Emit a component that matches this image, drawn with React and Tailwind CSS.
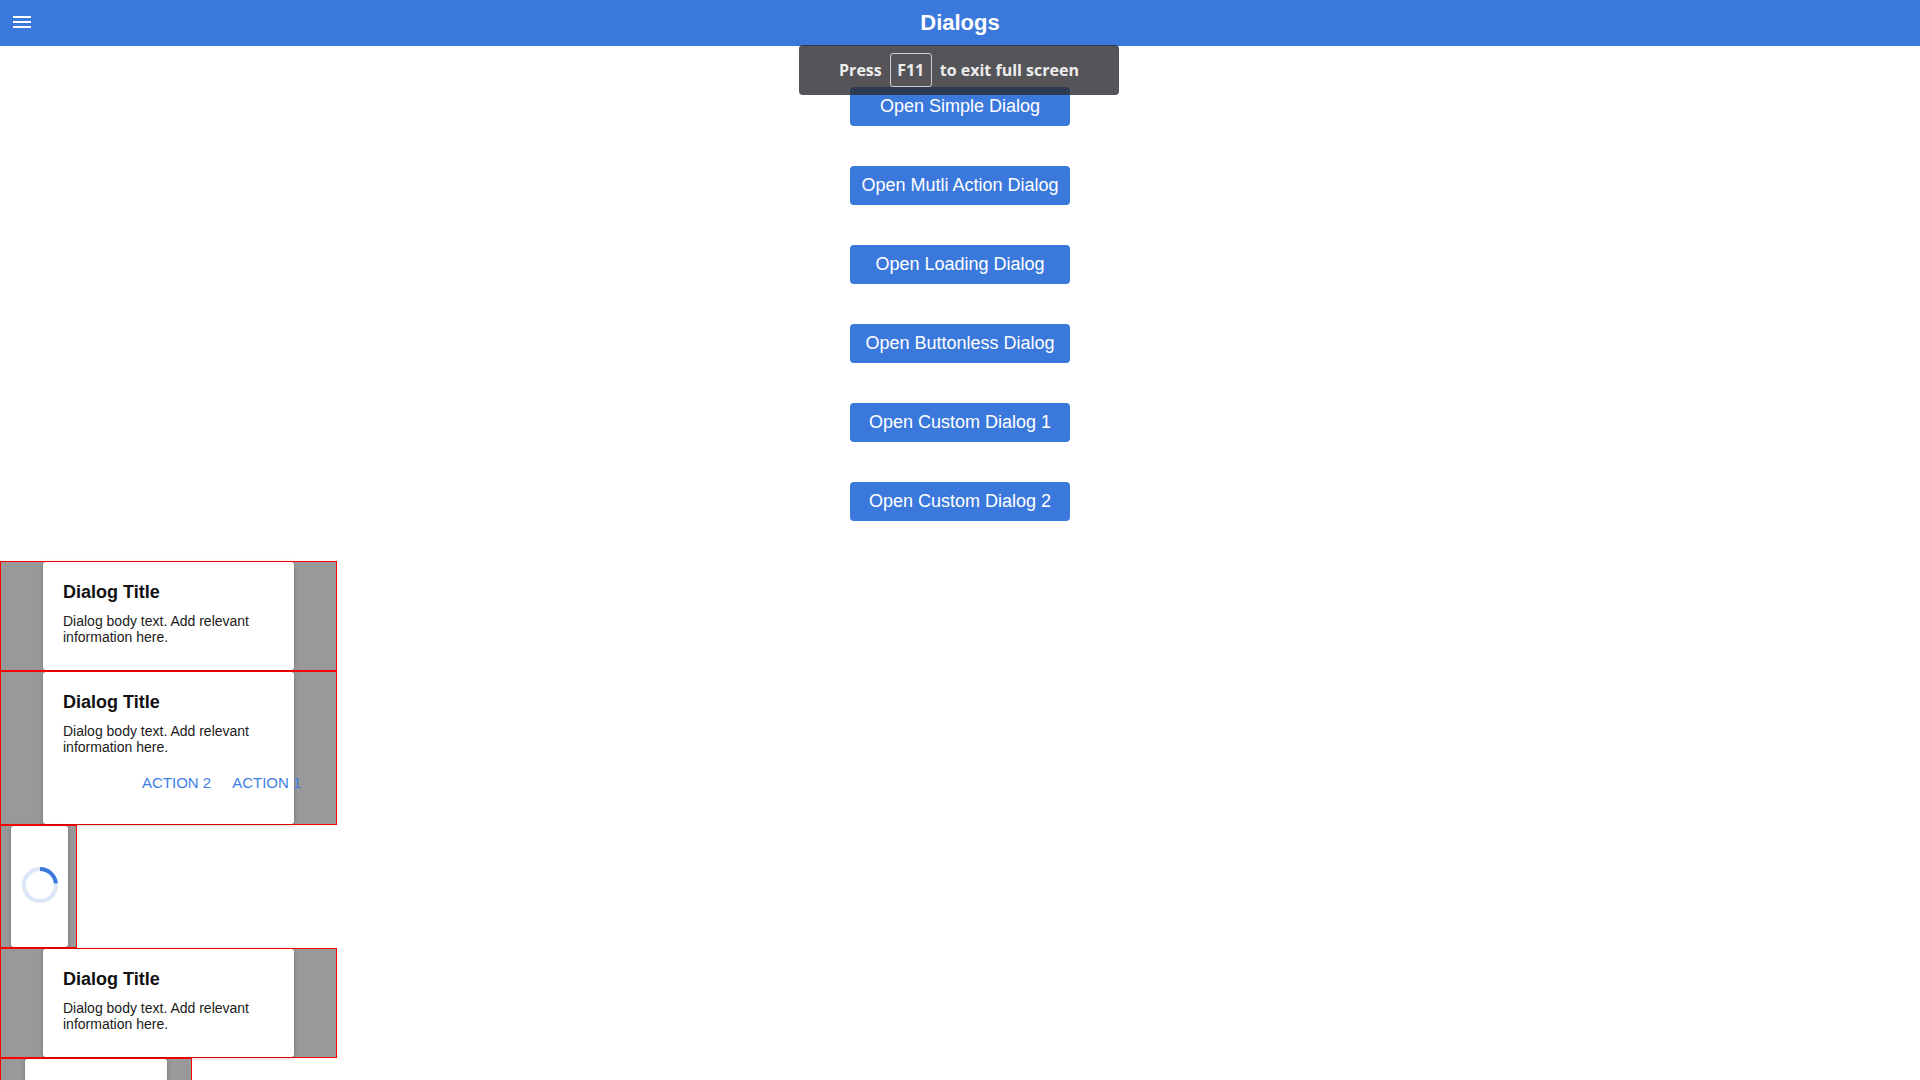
import React from 'react';

const buttons = [
  'Open Simple Dialog',
  'Open Mutli Action Dialog',
  'Open Loading Dialog',
  'Open Buttonless Dialog',
  'Open Custom Dialog 1',
  'Open Custom Dialog 2',
];

function DialogBody() {
  return (
    <>
      <h3 className="text-[18px] leading-[21px] font-bold text-[#111]">Dialog Title</h3>
      <p className="mt-[10px] text-[14px] leading-[16px] text-[#1a1a1a]">
        Dialog body text. Add relevant information here.
      </p>
    </>
  );
}

function Frame({ children, className = '' }) {
  return (
    <div className={`flex border border-[#ff0000] bg-[#999999] ${className}`}>
      {children}
    </div>
  );
}

function Spinner() {
  return (
    <svg width="36" height="36" viewBox="0 0 36 36">
      <circle cx="18" cy="18" r="16" fill="none" stroke="#dbe6f8" strokeWidth="4" />
      <path d="M18 2 A16 16 0 0 1 33.9 16.4" fill="none" stroke="#3b78dc" strokeWidth="4" />
    </svg>
  );
}

export default function App() {
  return (
    <div className="min-h-screen bg-white font-['Liberation_Sans',Arial,sans-serif]">
      {/* Top bar */}
      <header className="relative h-[46px] bg-[#3b78dc] flex items-center justify-center">
        <button className="absolute left-[10px] top-[10px] text-white">
          <svg width="24" height="24" viewBox="0 0 24 24" fill="currentColor">
            <path d="M3 18h18v-2H3v2zm0-5h18v-2H3v2zm0-7v2h18V6H3z" />
          </svg>
        </button>
        <h1 className="text-[22px] font-bold text-white leading-none">Dialogs</h1>
      </header>

      {/* Fullscreen notice */}
      <div className="absolute left-[799px] top-[45px] z-10 w-[320px] h-[50px] rounded-[4px] bg-[rgba(43,43,47,0.8)] flex items-center justify-center gap-[8px] text-[#ececec] text-[16px] font-bold font-['Open_Sans',sans-serif]">
        <span>Press</span>
        <span className="w-[42px] h-[34px] border border-[#cfcfcf] rounded-[3px] flex items-center justify-center">F11</span>
        <span>to exit full screen</span>
      </div>

      {/* Buttons */}
      <div className="flex flex-col items-center gap-[40px] pt-[41px]">
        {buttons.map((label) => (
          <button
            key={label}
            className="w-[220px] h-[39px] pb-[2px] rounded-[4px] bg-[#3b78dc] text-white text-[18px] leading-none"
          >
            {label}
          </button>
        ))}
      </div>

      {/* Rendered dialogs */}
      <div className="mt-[40px] flex flex-col items-start">
        <Frame className="pl-[42px] pr-[42px]">
          <div className="w-[251px] bg-white rounded-[3px] shadow-[0_1px_4px_rgba(0,0,0,0.25)] pt-[20px] px-[20px] pb-[25px]">
            <DialogBody />
          </div>
        </Frame>

        <Frame className="pl-[42px] pr-[42px]">
          <div className="w-[251px] bg-white rounded-[3px] shadow-[0_1px_4px_rgba(0,0,0,0.25)] pt-[20px] px-[20px] pb-[33px]">
            <DialogBody />
            <div className="mt-[19px] ml-[79px] flex gap-[21px] whitespace-nowrap text-[15px] leading-[17px] text-[#3d7fe6]">
              <span>ACTION 2</span>
              <span>ACTION 1</span>
            </div>
          </div>
        </Frame>

        <Frame className="pl-[10px] pr-[8px]">
          <div className="w-[57px] h-[121px] bg-white rounded-[3px] shadow-[0_1px_4px_rgba(0,0,0,0.25)] flex justify-center pt-[41px]">
            <Spinner />
          </div>
        </Frame>

        <Frame className="pl-[42px] pr-[42px]">
          <div className="w-[251px] bg-white rounded-[3px] shadow-[0_1px_4px_rgba(0,0,0,0.25)] pt-[20px] px-[20px] pb-[25px]">
            <DialogBody />
          </div>
        </Frame>

        <Frame className="px-[24px]">
          <div className="w-[142px] h-[120px] bg-white rounded-[3px] shadow-[0_1px_4px_rgba(0,0,0,0.25)]" />
        </Frame>
      </div>
    </div>
  );
}
